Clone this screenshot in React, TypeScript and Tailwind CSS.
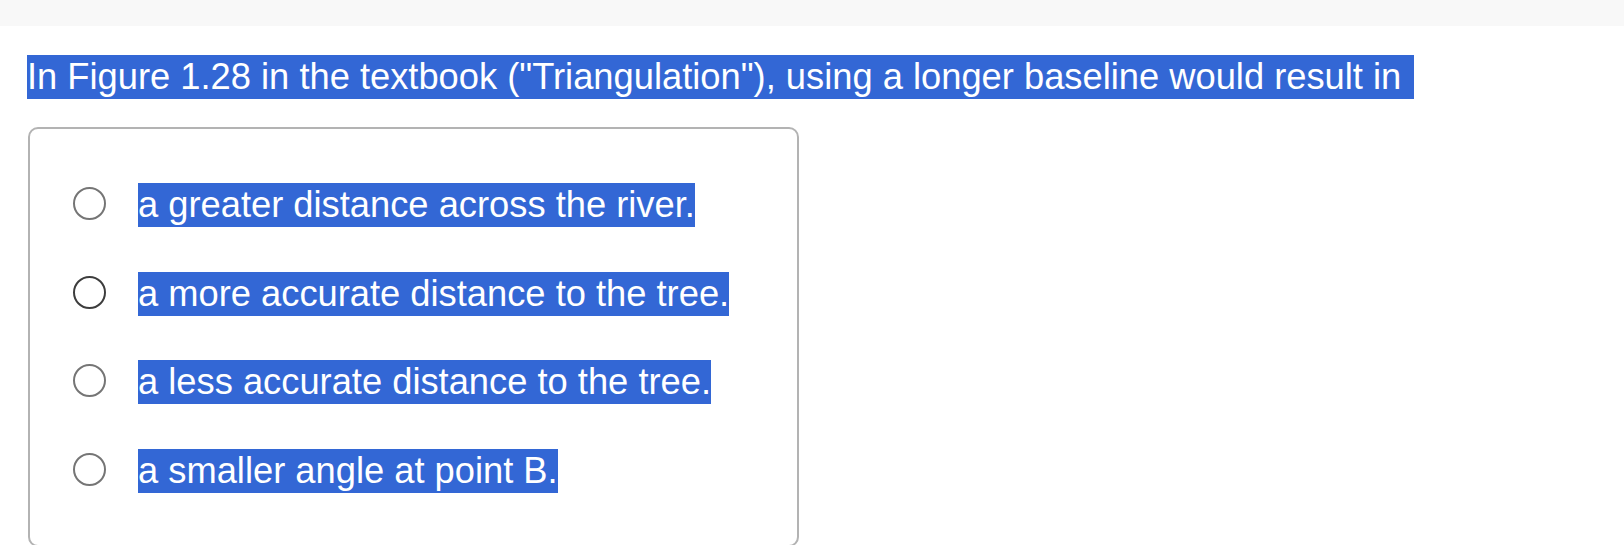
const OPTIONS = [
  { key: 'a', label: 'a greater distance across the river.', ring: 'border-[#757575]' },
  { key: 'b', label: 'a more accurate distance to the tree.', ring: 'border-[#3d3d3d]' },
  { key: 'c', label: 'a less accurate distance to the tree.', ring: 'border-[#757575]' },
  { key: 'd', label: 'a smaller angle at point B.', ring: 'border-[#757575]' },
];

export default function App() {
  return (
    <main className="min-h-[545px] bg-white font-['Liberation_Sans',Arial,sans-serif] text-[36.3px] text-black">
      {/* top strip */}
      <div className="h-[26px] bg-[#f8f8f8]" />

      <div className="pl-[27px] pt-[29px]">
        {/* Question */}
        <p className="leading-[44px]">
          <span className="inline-block bg-[#3367d5] pr-[13px] text-white">
            In Figure 1.28 in the textbook ("Triangulation"), using a longer baseline would result in
          </span>
        </p>

        {/* Answer card */}
        <div className="mt-[28px] ml-[1px] w-[771px] rounded-[10px] border-2 border-[#b3b3b3] pl-[43px] pt-[54px] pb-[52px]">
          <ul className="flex flex-col gap-[44.7px]">
            {OPTIONS.map((opt) => (
              <li key={opt.key} className="flex items-center gap-[32px]">
                <span
                  className={`-mt-[3px] h-[33px] w-[33px] shrink-0 rounded-full border-[2.5px] bg-white ${opt.ring}`}
                />
                <span className="inline-block bg-[#3367d5] leading-[44px] text-white">{opt.label}</span>
              </li>
            ))}
          </ul>
        </div>
      </div>
    </main>
  );
}
